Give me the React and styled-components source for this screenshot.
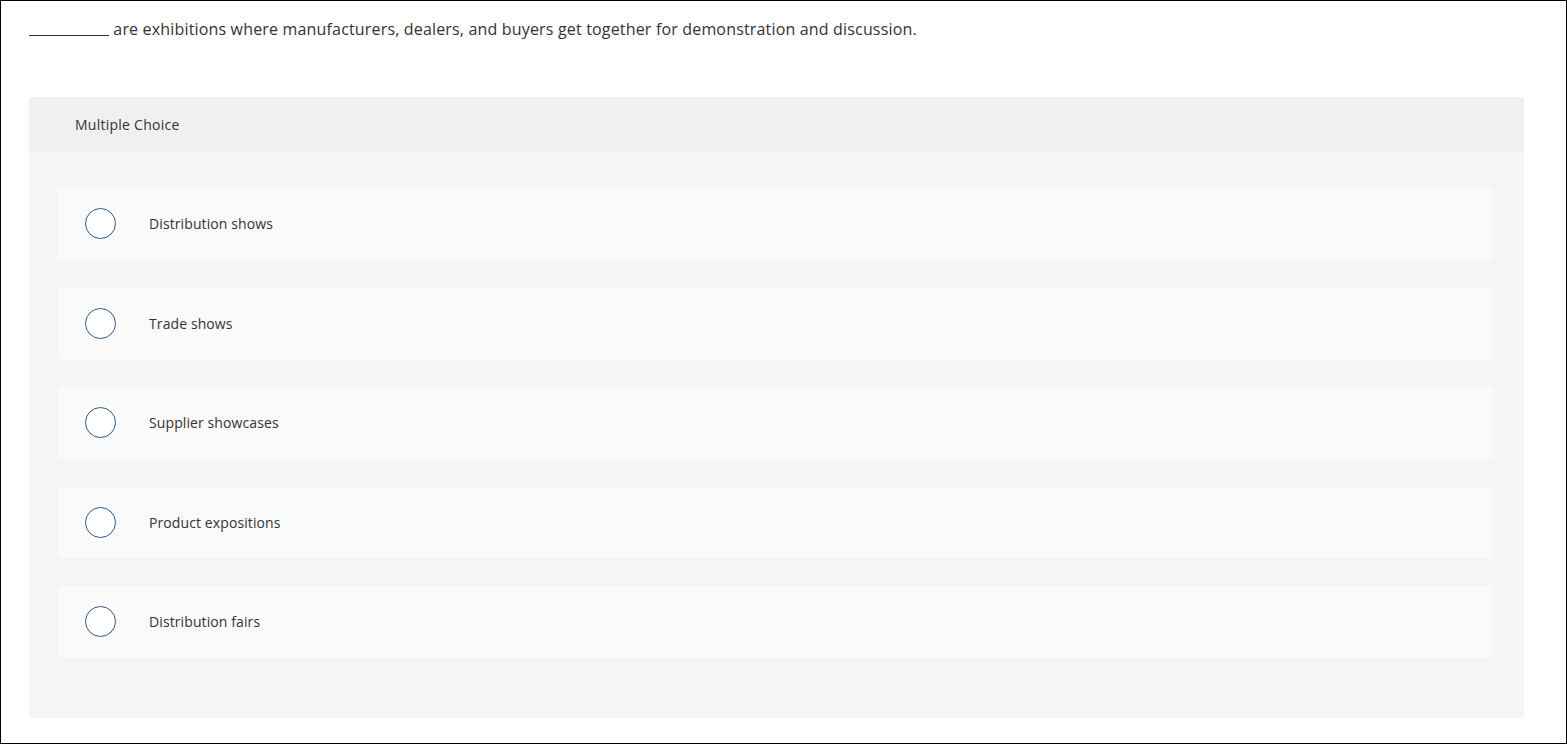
import React from "react";
import styled, { createGlobalStyle } from "styled-components";

const GlobalStyle = createGlobalStyle`
  html, body {
    margin: 0;
    padding: 0;
    background: #fff;
  }
  * {
    box-sizing: border-box;
  }
`;

const options = [
  "Distribution shows",
  "Trade shows",
  "Supplier showcases",
  "Product expositions",
  "Distribution fairs",
];

const App = () => {
  return (
    <>
      <GlobalStyle />
      <Page>
        <Question>
          <Blank /> are exhibitions where manufacturers, dealers, and buyers get
          together for demonstration and discussion.
        </Question>
        <Panel>
          <PanelHeader>Multiple Choice</PanelHeader>
          <Choices>
            {options.map((label) => (
              <Choice key={label}>
                <Radio />
                <ChoiceLabel>{label}</ChoiceLabel>
              </Choice>
            ))}
          </Choices>
        </Panel>
      </Page>
    </>
  );
};

const Page = styled.div`
  width: 1567px;
  height: 744px;
  border: 1px solid #000;
  padding: 17px 42px 25px 28px;
  font-family: "Open Sans", "Liberation Sans", sans-serif;
  color: #333;
`;

const Question = styled.p`
  margin: 0;
  font-size: 16px;
  line-height: 22px;
  letter-spacing: 0.17px;
  color: #333;
`;

const Blank = styled.span`
  display: inline-block;
  width: 80px;
  border-bottom: 1px solid #333;
  vertical-align: baseline;
  margin-bottom: -1px;
`;

const Panel = styled.section`
  margin-top: 57px;
  background: #f5f5f5;
  border-radius: 3px;
  height: 621px;
  overflow: hidden;
`;

const PanelHeader = styled.div`
  height: 55px;
  background: #f0f0f0;
  display: flex;
  align-items: center;
  padding-left: 46px;
  font-size: 14px;
  letter-spacing: 0.25px;
  color: #333;
`;

const Choices = styled.div`
  display: flex;
  flex-direction: column;
  gap: 28px;
  padding: 36px 31px 0 29px;
`;

const Choice = styled.label`
  display: flex;
  align-items: center;
  height: 71.5px;
  background: #fafafa;
  border-radius: 3px;
  padding-left: 27px;
  cursor: pointer;
`;

const Radio = styled.span`
  width: 31px;
  height: 31px;
  border-radius: 50%;
  border: 1.5px solid #2d5a87;
  background: #fff;
  flex-shrink: 0;
`;

const ChoiceLabel = styled.span`
  margin-left: 33px;
  font-size: 14px;
  letter-spacing: 0.1px;
  color: #333;
`;

export default App;
